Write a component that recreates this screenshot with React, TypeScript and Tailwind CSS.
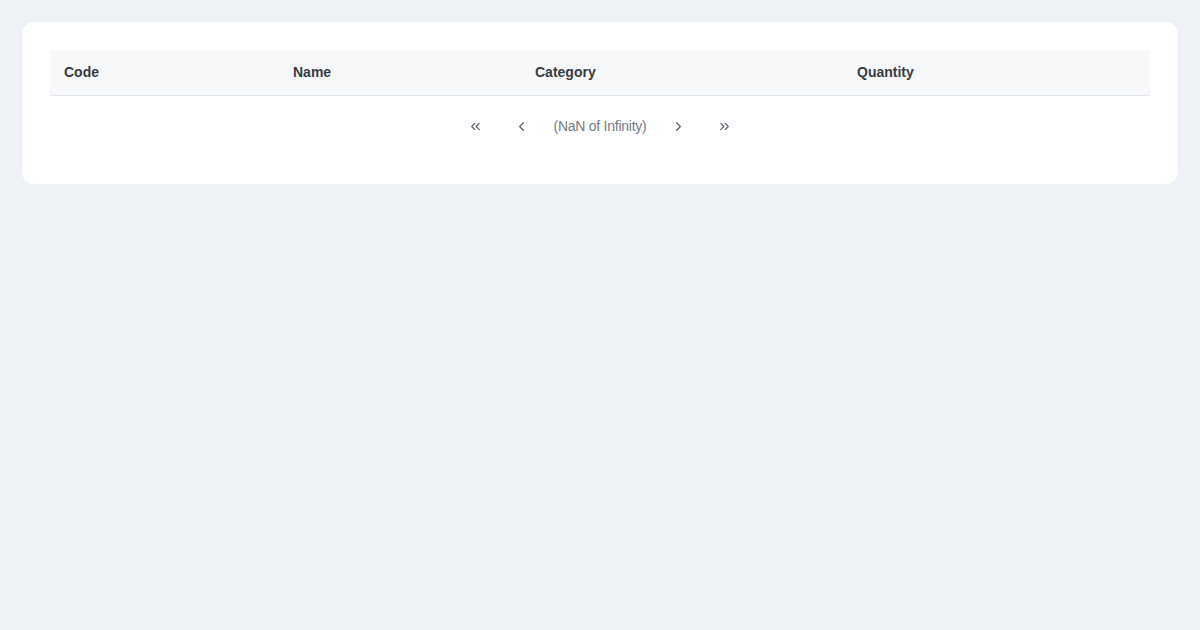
import { ChevronLeft, ChevronRight, ChevronsLeft, ChevronsRight } from "lucide-react";

const columns = [
  { label: "Code", width: "w-[229px]" },
  { label: "Name", width: "w-[242px]" },
  { label: "Category", width: "w-[322px]" },
  { label: "Quantity", width: "w-[307px]" },
];

export default function App() {
  return (
    <div
      className="min-h-[630px] bg-[#eef1f6] p-[22px]"
      style={{ fontFamily: '"Liberation Sans", Arial, sans-serif' }}
    >
      <div className="bg-white rounded-xl px-7 pt-7 pb-7">
        <table className="w-full table-fixed border-collapse">
          <thead>
            <tr className="bg-[#f7f8fa] border-b border-[#e1e4e8]">
              {columns.map((c) => (
                <th
                  key={c.label}
                  className={`${c.width} h-[45px] px-[14px] text-left text-sm font-bold text-[#373c43]`}
                >
                  {c.label}
                </th>
              ))}
            </tr>
          </thead>
          <tbody />
        </table>

        <div className="h-[60px] flex items-center justify-center gap-[14px] pt-px">
          <button className="w-8 h-8 flex items-center justify-center text-[#5b6270]">
            <ChevronsLeft size={15} strokeWidth={2} />
          </button>
          <button className="w-8 h-8 flex items-center justify-center text-[#5b6270]">
            <ChevronLeft size={15} strokeWidth={2} />
          </button>
          <span className="px-[2px] text-sm tracking-[-0.25px] text-[#767b84]">(NaN of Infinity)</span>
          <button className="w-8 h-8 flex items-center justify-center text-[#5b6270]">
            <ChevronRight size={15} strokeWidth={2} />
          </button>
          <button className="w-8 h-8 flex items-center justify-center text-[#5b6270]">
            <ChevronsRight size={15} strokeWidth={2} />
          </button>
        </div>
      </div>
    </div>
  );
}
